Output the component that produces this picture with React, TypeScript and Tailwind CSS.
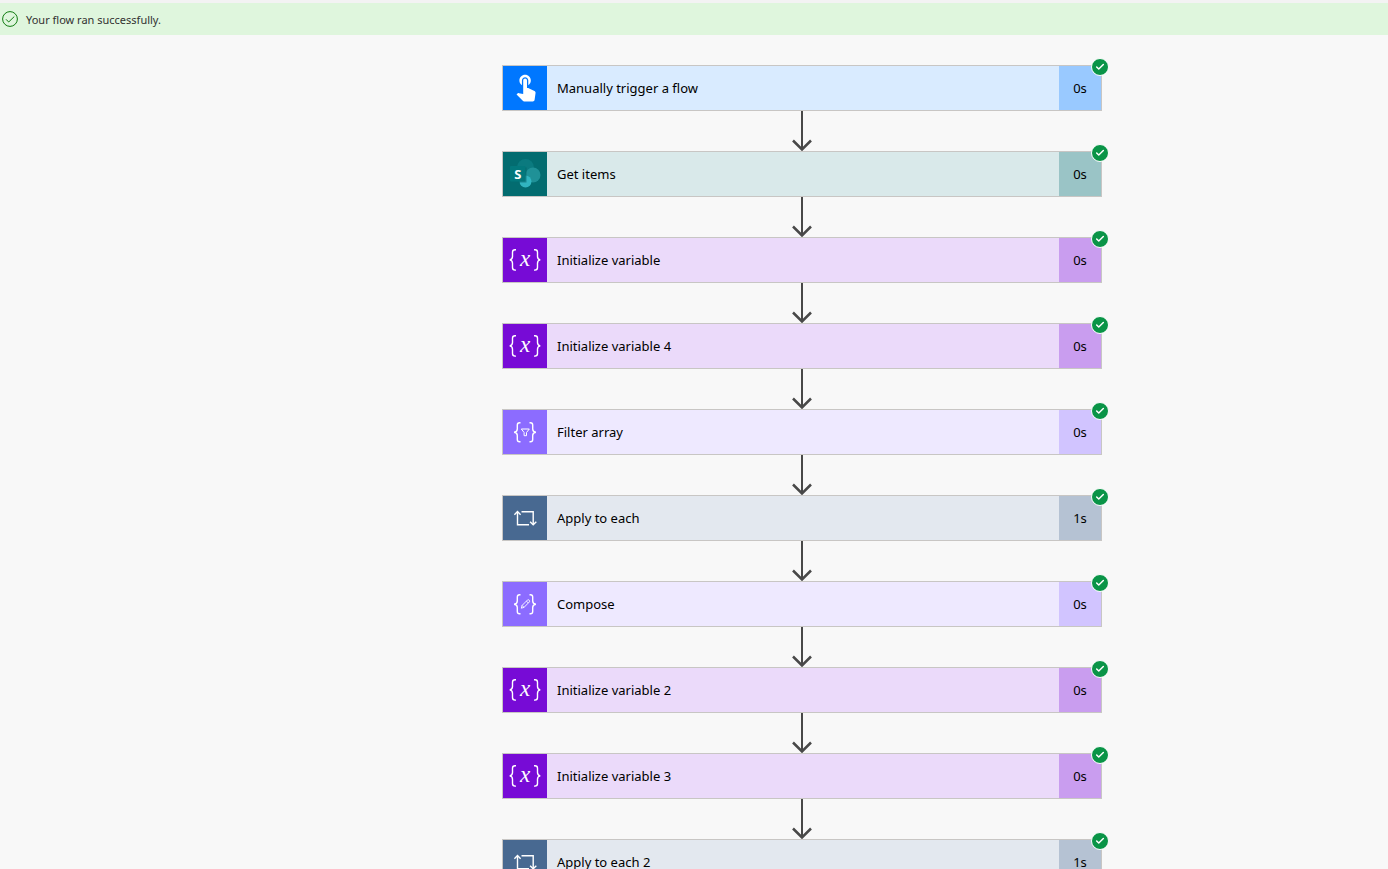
import React from 'react';
import { Check } from 'lucide-react';

type StepKind = 'trigger' | 'sharepoint' | 'variable' | 'filter' | 'loop' | 'compose';

const steps: { title: string; kind: StepKind; duration: string }[] = [
  { title: 'Manually trigger a flow', kind: 'trigger', duration: '0s' },
  { title: 'Get items', kind: 'sharepoint', duration: '0s' },
  { title: 'Initialize variable', kind: 'variable', duration: '0s' },
  { title: 'Initialize variable 4', kind: 'variable', duration: '0s' },
  { title: 'Filter array', kind: 'filter', duration: '0s' },
  { title: 'Apply to each', kind: 'loop', duration: '1s' },
  { title: 'Compose', kind: 'compose', duration: '0s' },
  { title: 'Initialize variable 2', kind: 'variable', duration: '0s' },
  { title: 'Initialize variable 3', kind: 'variable', duration: '0s' },
  { title: 'Apply to each 2', kind: 'loop', duration: '1s' },
];

const colors: Record<StepKind, { icon: string; body: string; time: string }> = {
  trigger: { icon: 'bg-[#0077ff]', body: 'bg-[#d9ebff]', time: 'bg-[#99c9ff]' },
  sharepoint: { icon: 'bg-[#036c70]', body: 'bg-[#d9e9ea]', time: 'bg-[#9ac4c6]' },
  variable: { icon: 'bg-[#770bd6]', body: 'bg-[#ebdafa]', time: 'bg-[#c99def]' },
  filter: { icon: 'bg-[#8c6cff]', body: 'bg-[#eee9ff]', time: 'bg-[#d1c4ff]' },
  loop: { icon: 'bg-[#486991]', body: 'bg-[#e3e8ef]', time: 'bg-[#b5c2d3]' },
  compose: { icon: 'bg-[#8c6cff]', body: 'bg-[#eee9ff]', time: 'bg-[#d1c4ff]' },
};

const SmallBraces = () => (
  <>
    <path d="M17.5 12.7h-1c-1.5 0-2.2.8-2.2 2.2v4c0 1.9-1 3-3.2 3.3 2.2.3 3.2 1.4 3.2 3.3v4c0 1.4.7 2.2 2.2 2.2h1" />
    <path d="M26.5 12.7h1c1.500 0 2.2.8 2.2 2.2v4c0 1.9 1 3 3.2 3.3-2.2.3-3.2 1.4-3.2 3.3v4c0 1.4-.7 2.2-2.2 2.2h-1" />
  </>
);

const StepIcon = ({ kind }: { kind: StepKind }) => (
  <svg viewBox="0 0 44 44" className="size-11" fill="none" stroke="white" strokeWidth="1.4" aria-hidden="true">
    {kind === 'trigger' && (
      <path
        transform="translate(7.5 4.9) scale(1.27)"
        fill="white"
        stroke="none"
        d="M9 11.24V7.5C9 6.12 10.12 5 11.5 5S14 6.12 14 7.5v3.74c1.21-.81 2-2.18 2-3.74C16 5.01 13.99 3 11.5 3S7 5.01 7 7.5c0 1.56.79 2.93 2 3.74zm9.84 4.63l-4.54-2.26c-.17-.07-.35-.11-.54-.11H13v-6c0-.83-.67-1.5-1.5-1.5S10 6.67 10 7.5v10.74l-3.43-.72c-.08-.01-.15-.03-.24-.03-.31 0-.59.13-.79.33l-.79.8 4.94 4.94c.27.27.65.44 1.06.44h6.79c.75 0 1.33-.55 1.44-1.28l.75-5.27c.01-.07.02-.14.02-.2 0-.62-.38-1.16-.91-1.38z"
      />
    )}
    {kind === 'sharepoint' && (
      <g stroke="none">
        <circle cx="22.5" cy="15.5" r="8.500" fill="#0b7a7f" />
        <circle cx="30" cy="23" r="7.5" fill="#1f9197" />
        <circle cx="22.5" cy="29.5" r="6" fill="#31b5c0" />
        <path d="M16 15.500h7.5v15H16z" fill="#035a5e" opacity="0.5" />
        <rect x="7" y="14" width="15.5" height="15.5" rx="1" fill="#03787c" />
        <text x="14.8" y="26.5" textAnchor="middle" fill="white" className="font-['Open_Sans',sans-serif] text-[13px] font-bold">
          S
        </text>
      </g>
    )}
    {kind === 'variable' && (
      <>
        <path d="M13 11.7h-1c-1.800 0-2.5.8-2.5 2.5v4.3c0 2-.8 3.1-2.8 3.4 2 .3 2.8 1.4 2.8 3.4v4.3c0 1.7.7 2.5 2.5 2.5h1" />
        <path d="M31 11.7h1c1.800 0 2.5.8 2.5 2.5v4.3c0 2 .8 3.1 2.8 3.4-2 .3-2.8 1.4-2.8 3.4v4.3c0 1.7-.7 2.5-2.5 2.5h-1" />
        <text x="22" y="28" textAnchor="middle" fill="white" stroke="none" className="font-['Liberation_Serif',serif] text-[23px] italic">
          x
        </text>
      </>
    )}
    {kind === 'filter' && (
      <>
        <SmallBraces />
        <path d="M18.3 19h8l-2.8 3.5v3.2h-2.4v-3.2z" strokeWidth="1" />
      </>
    )}
    {kind === 'compose' && (
      <>
        <SmallBraces />
        <path d="M18.3 26.2l.8-2.8 5.5-5.5c.9-.8 2.7.9 1.9 1.9L21 25.4zM19.1 23.4l1.9 2M23.4 19.1l1.9 1.9" strokeWidth="0.9" />
      </>
    )}
    {kind === 'loop' && (
      <>
        <path d="M14.5 16v12.700h11.5M18.5 15.7h11.7v12.7" />
        <path d="M11.4 18.7l3.1-3.1 3.1 3.1M27.1 25.7l3.1 3.1 3.1-3.1" />
      </>
    )}
  </svg>
);

const Arrow = () => (
  <svg viewBox="0 0 22 40" className="mx-auto h-10 w-[22px]" fill="none" stroke="#484848" strokeWidth="2" aria-hidden="true">
    <path d="M11 0v38" />
    <path d="M2 29.5l9 9 9-9" strokeWidth="2.5" />
  </svg>
);

const App = () => {
  return (
    <div className="flex h-screen flex-col overflow-hidden border-t-3 border-[#f3f3f3] bg-[#f8f8f8] font-['Noto_Sans',sans-serif] text-black">
      <div role="status" className="flex h-8 shrink-0 items-center gap-2 bg-[#dff6dd] pl-0.5 text-[11px] text-[#323130]">
        <svg viewBox="0 0 16 16" className="size-4" fill="none" stroke="#107c10" aria-hidden="true">
          <circle cx="8" cy="8" r="7.4" />
          <path d="M4 8.3l2.7 2.7 5.6-5.5" />
        </svg>
        <span className="pt-0.5">Your flow ran successfully.</span>
      </div>

      <main className="flex justify-center pt-[30px] pl-[216px]">
        <ol className="w-[600px]">
          {steps.map((step, index) => (
            <li key={step.title}>
              {index > 0 && <Arrow />}
              <button
                type="button"
                className={`relative flex w-full items-stretch border border-[#c8c6c4] text-left text-[13px] ${colors[step.kind].body}`}
              >
                <span className={colors[step.kind].icon}>
                  <StepIcon kind={step.kind} />
                </span>
                <span className="flex flex-1 items-center px-2.5 pt-0.5">{step.title}</span>
                <span className={`flex w-[42px] items-center justify-center pt-0.5 ${colors[step.kind].time}`}>
                  {step.duration}
                </span>
                {/* Run status */}
                <span className="absolute -top-2 -right-2 flex size-[18px] items-center justify-center rounded-full border border-white bg-[#0a9447]">
                  <Check size={10} strokeWidth={3.5} color="white" aria-label="Succeeded" />
                </span>
              </button>
            </li>
          ))}
        </ol>
      </main>
    </div>
  );
};

export default App;
